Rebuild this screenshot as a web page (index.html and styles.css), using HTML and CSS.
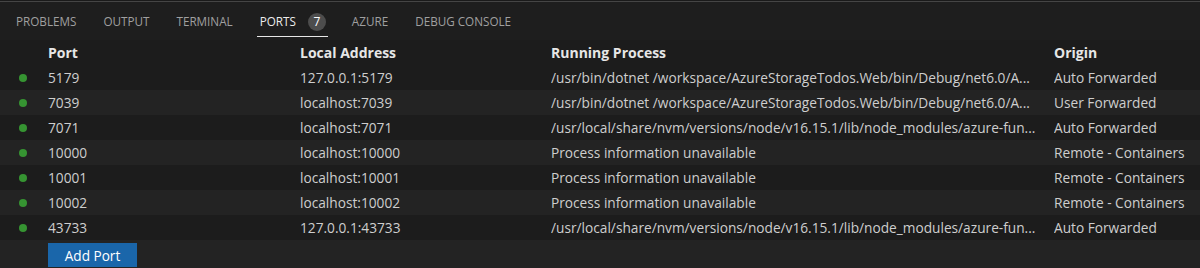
FILE: index.html
```html
<!DOCTYPE html>
<html>
<head>
<meta charset="utf-8">
<link rel="stylesheet" href="styles.css">
</head>
<body>
<div class="panel">
  <div class="topstrip"></div>
  <div class="tabs">
    <div class="tab">PROBLEMS</div>
    <div class="tab">OUTPUT</div>
    <div class="tab">TERMINAL</div>
    <div class="tab active">PORTS <span class="badge">7</span></div>
    <div class="tab">AZURE</div>
    <div class="tab">DEBUG CONSOLE</div>
  </div>
  <div class="table">
    <div class="row head">
      <div class="cell icon"></div>
      <div class="cell">Port</div>
      <div class="cell">Local Address</div>
      <div class="cell">Running Process</div>
      <div class="cell">Origin</div>
    </div>
    <div class="row odd">
      <div class="cell icon"><span class="dot"></span></div>
      <div class="cell">5179</div>
      <div class="cell">127.0.0.1:5179</div>
      <div class="cell">/usr/bin/dotnet /workspace/AzureStorageTodos.Web/bin/Debug/net6.0/A...</div>
      <div class="cell">Auto Forwarded</div>
    </div>
    <div class="row">
      <div class="cell icon"><span class="dot"></span></div>
      <div class="cell">7039</div>
      <div class="cell">localhost:7039</div>
      <div class="cell">/usr/bin/dotnet /workspace/AzureStorageTodos.Web/bin/Debug/net6.0/A...</div>
      <div class="cell">User Forwarded</div>
    </div>
    <div class="row odd">
      <div class="cell icon"><span class="dot"></span></div>
      <div class="cell">7071</div>
      <div class="cell">localhost:7071</div>
      <div class="cell">/usr/local/share/nvm/versions/node/v16.15.1/lib/node_modules/azure-fun...</div>
      <div class="cell">Auto Forwarded</div>
    </div>
    <div class="row">
      <div class="cell icon"><span class="dot"></span></div>
      <div class="cell">10000</div>
      <div class="cell">localhost:10000</div>
      <div class="cell">Process information unavailable</div>
      <div class="cell">Remote - Containers</div>
    </div>
    <div class="row odd">
      <div class="cell icon"><span class="dot"></span></div>
      <div class="cell">10001</div>
      <div class="cell">localhost:10001</div>
      <div class="cell">Process information unavailable</div>
      <div class="cell">Remote - Containers</div>
    </div>
    <div class="row">
      <div class="cell icon"><span class="dot"></span></div>
      <div class="cell">10002</div>
      <div class="cell">localhost:10002</div>
      <div class="cell">Process information unavailable</div>
      <div class="cell">Remote - Containers</div>
    </div>
    <div class="row odd">
      <div class="cell icon"><span class="dot"></span></div>
      <div class="cell">43733</div>
      <div class="cell">127.0.0.1:43733</div>
      <div class="cell">/usr/local/share/nvm/versions/node/v16.15.1/lib/node_modules/azure-fun...</div>
      <div class="cell">Auto Forwarded</div>
    </div>
  </div>
  <div class="actions">
    <button class="btn">Add Port</button>
  </div>
</div>
</body>
</html>
```
FILE: styles.css
```css
html, body {
  margin: 0;
  padding: 0;
  background: #232323;
}
.panel {
  width: 1200px;
  height: 268px;
  overflow: hidden;
  background: #232323;
  font-family: "Open Sans", "Noto Sans", sans-serif;
  color: #cecece;
}
.topstrip {
  height: 1px;
  background: #1a1a1a;
  border-bottom: 1px solid #454545;
}
.tabs {
  height: 35px;
  display: flex;
  align-items: stretch;
  padding-left: 13px;
  gap: 21px;
  background: #1e1e1e;
}
.tab {
  box-sizing: border-box;
  display: flex;
  align-items: center;
  padding: 4px 3px 0;
  border-bottom: 1px solid transparent;
  font-size: 11.7px;
  color: #a0a0a0;
}
.tab.active {
  color: #ececec;
  border-bottom-color: #e7e7e7;
  padding-right: 2px;
}
.badge {
  display: inline-flex;
  align-items: center;
  justify-content: center;
  width: 18px;
  height: 18px;
  margin-left: 12px;
  margin-top: 1px;
  border-radius: 50%;
  background: #4d4d4d;
  color: #ffffff;
  font-size: 12px;
}
.table {
  padding-top: 3px;
  background: #1e1e1e;
  font-size: 13.7px;
}
.row {
  display: grid;
  grid-template-columns: 48px 252px 251px 503px 146px;
  height: 25px;
  align-items: center;
  background: #232323;
}
.row.head, .row.odd {
  background: #1c1c1c;
}
.row.head {
  font-weight: 700;
  font-size: 14px;
  color: #e6e6e6;
}
.cell {
  white-space: nowrap;
  overflow: hidden;
  padding-right: 4px;
}
.icon {
  display: flex;
  align-items: center;
  padding-left: 19px;
}
.dot {
  width: 8px;
  height: 8px;
  border-radius: 50%;
  background: #369432;
}
.actions {
  padding: 3px 0 0 48px;
}
.btn {
  width: 89px;
  height: 24px;
  border: none;
  background: #1a66aa;
  color: #ffffff;
  font-family: "Open Sans", "Noto Sans", sans-serif;
  font-size: 13.6px;
  padding: 0;
}
```
